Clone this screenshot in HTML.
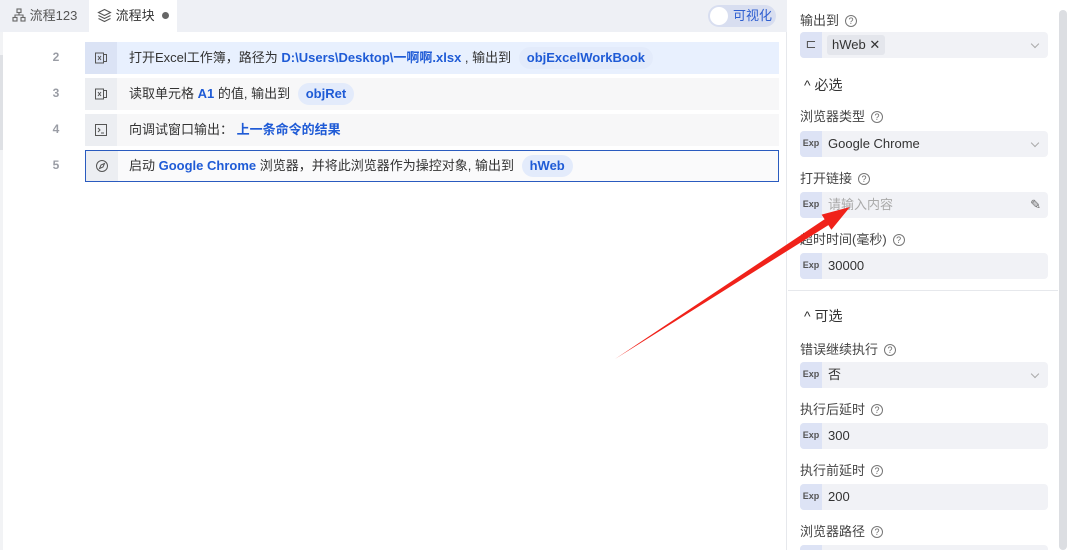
<!DOCTYPE html>
<html><head><meta charset="utf-8"><style>
*{box-sizing:border-box;margin:0;padding:0}
html,body{width:1070px;height:550px;overflow:hidden}
body{background:#fff;font-family:"Liberation Sans","Noto Sans CJK SC",sans-serif;font-size:13px;color:#333;position:relative}
.tabbar{position:absolute;left:0;top:0;width:787px;height:32px;background:#eef0f5}
.tab{position:absolute;top:0;height:32px;line-height:32px;font-size:13px;color:#555}
.left{position:absolute;left:0;top:32px;width:787px;height:518px;background:#fff;border-right:1px solid #e6e8ec}
.lstrip{position:absolute;left:0;top:32px;width:3px;height:518px;background:#f2f3f5}
.lstrip2{position:absolute;left:0;top:55px;width:3px;height:95px;background:#dfe1e5}
.row{position:absolute;left:85px;width:694px;height:32px;background:#f7f7f8;line-height:32px}
.row .ic{position:absolute;left:0;top:0;width:32px;height:32px;background:#eceef2;display:flex;align-items:center;justify-content:center}
.row .tx{position:absolute;left:44px;top:0;white-space:nowrap;font-size:13px;color:#333}
.b{color:#1f5bd6;font-weight:bold}
.chip{display:inline-block;background:#e3ebfb;color:#1f5bd6;font-weight:bold;border-radius:12px;padding:0 8px;height:22px;line-height:22px;margin-left:4px}
.num{position:absolute;left:50px;width:12px;text-align:center;color:#9a9da5;font-weight:bold;font-size:12px}
.toggle{position:absolute;left:708px;top:5px;width:68px;height:22px;border-radius:11px;background:#d8def0}
.toggle .k{position:absolute;left:2px;top:2px;width:18px;height:18px;border-radius:9px;background:#fff}
.toggle span{position:absolute;left:25px;top:0;line-height:22px;color:#2f5fd0;font-size:13px}
.right{position:absolute;left:788px;top:0;width:282px;height:550px;background:#fff}
.lab{position:absolute;left:800px;font-size:13px;color:#444}
.q{display:inline-block;width:12px;height:12px;border:1px solid #777;border-radius:50%;font-size:9px;line-height:10px;text-align:center;color:#666;margin-left:6px;vertical-align:1px}
.fld{position:absolute;left:800px;width:248px;height:26px;background:#f1f2f6;border-radius:4px;font-size:13px;line-height:26px;color:#333}
.fld .e{position:absolute;left:0;top:0;width:22px;height:26px;background:#dde3f5;border-radius:4px 0 0 4px;font-size:9px;font-weight:bold;color:#555;text-align:center;line-height:24px}
.fld .v{position:absolute;left:28px;top:0}
.fld .dd{position:absolute;right:10px;top:9px;width:6px;height:6px;border-right:1px solid #aaa;border-bottom:1px solid #aaa;transform:rotate(45deg)}
.sec{position:absolute;left:804px;font-size:14px;color:#333}
.scroll{position:absolute;left:1059px;top:10px;width:8px;height:540px;background:#dcdee2;border-radius:4px}
</style></head><body>
<div class="tabbar"></div>
<div class="tab" style="left:12px"><svg width="14" height="14" viewBox="0 0 14 14" style="vertical-align:-2px" fill="none" stroke="#666" stroke-width="1.1"><rect x="5" y="1" width="4" height="3.5"/><rect x="1" y="9.5" width="4" height="3.5"/><rect x="9" y="9.5" width="4" height="3.5"/><path d="M7 4.5v2.5M3 9.5V7h8v2.5"/></svg> 流程123</div>
<div class="tab" style="left:89px;width:88px;background:#fff;padding-left:8px;color:#333"><svg width="15" height="15" viewBox="0 0 15 15" style="vertical-align:-3px" fill="none" stroke="#555" stroke-width="1.1"><path d="M7.5 1.5l6 3-6 3-6-3z"/><path d="M1.5 7.5l6 3 6-3M1.5 10.5l6 3 6-3"/></svg> 流程块 <span style="display:inline-block;width:7px;height:7px;border-radius:50%;background:#666;margin-left:4px;vertical-align:1px"></span></div>
<div class="toggle"><div class="k"></div><span>可视化</span></div>
<div class="left"></div>
<div class="lstrip"></div><div class="lstrip2"></div>

<div class="num" style="top:50px">2</div>
<div class="num" style="top:86px">3</div>
<div class="num" style="top:122px">4</div>
<div class="num" style="top:158px">5</div>

<div class="row" style="top:42px;background:#e8f0fe"><div class="ic" style="background:#dbe3f5"><svg width="14" height="14" viewBox="0 0 14 14" fill="none" stroke="#555" stroke-width="1"><rect x="1.5" y="2" width="8" height="10"/><path d="M9.5 3.5h3v7h-3M4 5l3 4M7 5l-3 4"/></svg></div><div class="tx">打开Excel工作簿，路径为 <span class="b">D:\Users\Desktop\一啊啊.xlsx</span> , 输出到 <span class="chip">objExcelWorkBook</span></div></div>
<div class="row" style="top:78px"><div class="ic"><svg width="14" height="14" viewBox="0 0 14 14" fill="none" stroke="#555" stroke-width="1"><rect x="1.5" y="2" width="8" height="10"/><path d="M9.5 3.5h3v7h-3M4 5l3 4M7 5l-3 4"/></svg></div><div class="tx">读取单元格 <span class="b">A1</span> 的值, 输出到 <span class="chip">objRet</span></div></div>
<div class="row" style="top:114px"><div class="ic"><svg width="14" height="14" viewBox="0 0 14 14" fill="none" stroke="#555" stroke-width="1"><rect x="1.5" y="1.5" width="11" height="11"/><path d="M4 5l2 2-2 2M7 10h3"/></svg></div><div class="tx">向调试窗口输出： <span class="b">上一条命令的结果</span></div></div>
<div class="row" style="top:150px;border:1px solid #2a5bbf;background:#fafafb;line-height:30px"><div class="ic" style="height:30px"><svg width="14" height="14" viewBox="0 0 14 14" fill="none" stroke="#555" stroke-width="1"><circle cx="7" cy="7" r="5.5"/><path d="M9.5 4.5L6 6 4.5 9.5 8 8z"/></svg></div><div class="tx" style="left:43px">启动 <span class="b">Google Chrome</span> 浏览器，并将此浏览器作为操控对象, 输出到 <span class="chip">hWeb</span></div></div>

<div class="right"></div>
<div class="scroll"></div>

<div class="lab" style="top:10px">输出到<span class="q">?</span></div>
<div class="fld" style="top:32px"><div class="e" style="font-size:13px;font-weight:normal;color:#555">⊏</div><span style="position:absolute;left:27px;top:3px;height:20px;line-height:20px;background:#e4e6ec;border-radius:3px;padding:0 5px">hWeb ✕</span><span class="dd"></span></div>
<div class="sec" style="top:75px">^ 必选</div>
<div class="lab" style="top:106px">浏览器类型<span class="q">?</span></div>
<div class="fld" style="top:131px"><div class="e">Exp</div><span class="v">Google Chrome</span><span class="dd"></span></div>
<div class="lab" style="top:168px">打开链接<span class="q">?</span></div>
<div class="fld" style="top:192px"><div class="e">Exp</div><span class="v" style="color:#aaa">请输入内容</span><span style="position:absolute;right:7px;top:0;font-size:13px;color:#666">✎</span></div>
<div class="lab" style="top:229px">超时时间(毫秒)<span class="q">?</span></div>
<div class="fld" style="top:253px"><div class="e">Exp</div><span class="v">30000</span></div>
<div style="position:absolute;left:788px;top:290px;width:270px;height:1px;background:#e6e8ec"></div>
<div class="sec" style="top:306px">^ 可选</div>
<div class="lab" style="top:339px">错误继续执行<span class="q">?</span></div>
<div class="fld" style="top:362px"><div class="e">Exp</div><span class="v">否</span><span class="dd"></span></div>
<div class="lab" style="top:399px">执行后延时<span class="q">?</span></div>
<div class="fld" style="top:423px"><div class="e">Exp</div><span class="v">300</span></div>
<div class="lab" style="top:460px">执行前延时<span class="q">?</span></div>
<div class="fld" style="top:484px"><div class="e">Exp</div><span class="v">200</span></div>
<div class="lab" style="top:521px">浏览器路径<span class="q">?</span></div>
<div class="fld" style="top:545px"><div class="e">Exp</div></div>

<svg style="position:absolute;left:0;top:0" width="1070" height="550"><polygon points="615,359 824.6,219.3 821.6,214.6 850,207 831.4,229.8 828.4,225.1" fill="#f0221a"/></svg>
</body></html>
